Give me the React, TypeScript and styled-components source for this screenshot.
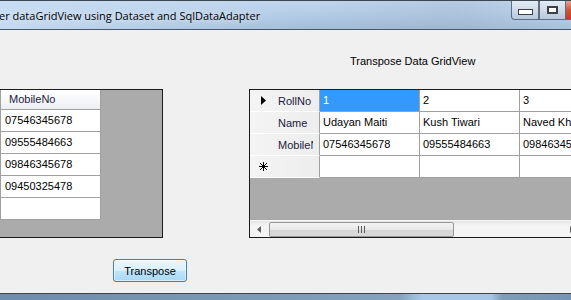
import React from 'react'
import styled, { createGlobalStyle } from 'styled-components'

const GlobalStyle = createGlobalStyle`
	html, body {
		margin: 0;
		padding: 0;
		overflow: hidden;
		background: #f0f0f0;
	}
`

const Window = styled.div`
	width: 571px;
	height: 300px;
	display: flex;
	flex-direction: column;
	overflow: hidden;
	font-family: 'Liberation Sans', Arial, sans-serif;
	font-size: 11px;
	color: #000;
`

const TitleBar = styled.div`
	flex: none;
	display: flex;
	align-items: flex-start;
	justify-content: space-between;
	border-top: 1px solid #3a4652;
	border-bottom: 1px solid #4b5763;
	box-sizing: border-box;
	height: 30px;
	background: linear-gradient(to right, rgba(200, 222, 244, 0.9) 0%, rgba(176, 200, 226, 0.2) 55%, rgba(160, 180, 204, 0.4) 80%, rgba(190, 212, 236, 0.3) 100%),
		linear-gradient(to bottom, #c3d9ef 0%, #b4cce6 50%, #9fb9d5 100%);
`

const TitleText = styled.div`
	font-family: 'Open Sans', 'Noto Sans', sans-serif;
	font-size: 11px;
	line-height: 16px;
	margin-top: 7px;
	margin-left: -1px;
	white-space: nowrap;
	color: #000;
	text-shadow: 0 0 6px rgba(255, 255, 255, 0.9);
`

const CaptionButtons = styled.div`
	display: flex;
	margin-right: -42px;
`

const CaptionButton = styled.div<{ w: number; close?: boolean }>`
	width: ${({ w }) => w}px;
	height: 19px;
	box-sizing: border-box;
	display: flex;
	align-items: center;
	justify-content: center;
	border: 1px solid #5e6e80;
	border-top: none;
	border-left-width: ${({ close }) => (close ? 0 : 1)}px;
	background: ${({ close }) =>
		close
			? 'linear-gradient(to bottom, #e8a493 0%, #d0543b 50%, #c43c1f 100%)'
			: 'linear-gradient(to bottom, #e4ebf3 0%, #cfdbe8 50%, #b7c9dc 100%)'};
	&:first-child {
		border-bottom-left-radius: 4px;
	}
`

const MinGlyph = styled.div`
	width: 13px;
	height: 4px;
	margin-top: 4px;
	background: #fff;
	border: 1px solid #3b3f46;
`

const MaxGlyph = styled.div`
	width: 9px;
	height: 6px;
	background: #fff;
	border: 1px solid #3b3f46;
	box-shadow: inset 0 0 0 1px #3b3f46, inset 0 0 0 2px #fff;
`

const Client = styled.div`
	flex: 1;
	display: flex;
	background: #f0f0f0;
`

const LeftCol = styled.div`
	width: 162px;
	flex: none;
	display: flex;
	flex-direction: column;
	align-items: flex-start;
`

const RightCol = styled.div`
	margin-left: 87px;
	flex: none;
	display: flex;
	flex-direction: column;
`

const Caption = styled.div`
	margin-top: 25px;
	padding-left: 101px;
	line-height: 13px;
	height: 13px;
`

const GridBox = styled.div<{ w: number; top: number; shiftLeft?: number }>`
	width: ${({ w }) => w}px;
	height: 149px;
	box-sizing: border-box;
	border: 1px solid #1b1b1b;
	background: #ababab;
	margin-top: ${({ top }) => top}px;
	margin-left: ${({ shiftLeft }) => shiftLeft ?? 0}px;
	display: flex;
	flex-direction: column;
	overflow: hidden;
`

const HeaderCell = styled.div`
	width: 101px;
	height: 20px;
	box-sizing: border-box;
	border-left: 1px solid #a0a0a0;
	border-right: 1px solid #a0a0a0;
	border-bottom: 1px solid #a0a0a0;
	background: linear-gradient(to bottom, #ffffff 0%, #f7f8fa 50%, #eceef2 100%);
	color: #1a1a40;
	padding-left: 8px;
	line-height: 19px;
`

const Row = styled.div`
	display: flex;
	height: 22px;
	flex: none;
`

const Cell = styled.div<{ w: number; selected?: boolean; leftLine?: boolean }>`
	width: ${({ w }) => w}px;
	flex: none;
	box-sizing: border-box;
	height: 22px;
	border-bottom: 1px solid #a0a0a0;
	border-right: 1px solid #a0a0a0;
	border-left: ${({ leftLine }) => (leftLine ? '1px solid #a0a0a0' : 'none')};
	background: ${({ selected }) => (selected ? '#3399ff' : '#ffffff')};
	color: ${({ selected }) => (selected ? '#ffffff' : '#000000')};
	padding-left: ${({ leftLine }) => (leftLine ? 4 : 3)}px;
	line-height: 21px;
	white-space: nowrap;
	overflow: hidden;
`

const RowHeader = styled.div`
	width: 70px;
	flex: none;
	box-sizing: border-box;
	height: 22px;
	border-bottom: 1px solid #ffffff;
	border-right: 1px solid #a0a0a0;
	background: linear-gradient(to right, #f4f4f4 0%, #ededed 100%);
	display: flex;
	align-items: center;
	color: #1a1a40;
	white-space: nowrap;
	overflow: hidden;
`

const RowMarker = styled.div`
	width: 27px;
	flex: none;
	display: flex;
	align-items: center;
	justify-content: center;
	padding-right: 1px;
`

const RowLabel = styled.div`
	width: 35px;
	overflow: hidden;
	white-space: nowrap;
`

const GreyFill = styled.div`
	flex: 1;
`

const ScrollBar = styled.div`
	height: 17px;
	flex: none;
	display: flex;
	align-items: center;
	background: linear-gradient(to bottom, #e6e6e6 0%, #f4f4f4 30%, #f4f4f4 100%);
	border-top: 1px solid #f4f4f4;
	box-sizing: border-box;
`

const ArrowBox = styled.div`
	width: 17px;
	flex: none;
	display: flex;
	align-items: center;
	justify-content: center;
`

const Thumb = styled.div`
	width: 185px;
	height: 15px;
	box-sizing: border-box;
	margin-left: 2px;
	border: 1px solid #979797;
	border-radius: 2px;
	background: linear-gradient(to bottom, #f3f3f3 0%, #e8e8e8 50%, #d6d6d6 51%, #d9d9d9 100%);
	display: flex;
	align-items: center;
	justify-content: center;
`

const Track = styled.div`
	flex: 1;
`

const ButtonRow = styled.div`
	margin-top: 21px;
	margin-left: 113px;
`

const PushButton = styled.button`
	width: 74px;
	height: 23px;
	box-sizing: border-box;
	border: 1px solid #3c7fb1;
	border-radius: 3px;
	background: linear-gradient(to bottom, #eaf6fd 0%, #d9f0fc 50%, #bee6fd 51%, #a7d9f5 100%);
	box-shadow: inset 0 0 0 1px rgba(255, 255, 255, 0.6);
	font-family: 'Liberation Sans', Arial, sans-serif;
	font-size: 11px;
	color: #000;
	padding: 0;
	line-height: 20px;
`

const BottomFrame = styled.div`
	height: 7px;
	flex: none;
	border-top: 1px solid #3d454e;
	box-sizing: border-box;
	background: linear-gradient(to right, #6e8cab 0%, #7a97b6 40%, #86a2c0 70%, #a9c8e8 74%, #a7c5e4 86%, #7f9cbb 88%, #7794b4 100%);
`

const Triangle = () => (
	<svg width="5" height="9" viewBox="0 0 5 9">
		<path d="M0 0 L5 4.5 L0 9 Z" fill="#000" />
	</svg>
)

const NewRowStar = () => (
	<svg width="9" height="9" viewBox="0 0 9 9">
		<g stroke="#000" strokeWidth="1" shapeRendering="crispEdges">
			<line x1="4.5" y1="0" x2="4.5" y2="9" />
			<line x1="0" y1="4.5" x2="9" y2="4.5" />
			<line x1="1" y1="1" x2="8" y2="8" />
			<line x1="8" y1="1" x2="1" y2="8" />
		</g>
	</svg>
)

const ScrollArrow = ({ dir }: { dir: 'left' | 'right' }) => (
	<svg width="4" height="7" viewBox="0 0 4 7">
		<path d={dir === 'left' ? 'M4 0 L0 3.5 L4 7 Z' : 'M0 0 L4 3.5 L0 7 Z'} fill="#606060" />
	</svg>
)

const Grip = () => (
	<svg width="7" height="7" viewBox="0 0 7 7">
		<g fill="#5a5a5a">
			<rect x="0" y="0" width="1" height="7" />
			<rect x="3" y="0" width="1" height="7" />
			<rect x="6" y="0" width="1" height="7" />
		</g>
	</svg>
)

const mobiles = ['07546345678', '09555484663', '09846345678', '09450325478']

const transposed: { label: string; values: string[] }[] = [
	{ label: 'RollNo', values: ['1', '2', '3'] },
	{ label: 'Name', values: ['Udayan Maiti', 'Kush Tiwari', 'Naved Khan'] },
	{ label: 'MobileNo', values: ['07546345678', '09555484663', '09846345678'] },
]

export default function App() {
	return (
		<>
			<GlobalStyle />
			<Window>
				<TitleBar>
					<TitleText>er dataGridView using Dataset and SqlDataAdapter</TitleText>
					<CaptionButtons>
						<CaptionButton w={28}>
							<MinGlyph />
						</CaptionButton>
						<CaptionButton w={27}>
							<MaxGlyph />
						</CaptionButton>
						<CaptionButton w={47} close />
					</CaptionButtons>
				</TitleBar>
				<Client>
					<LeftCol>
						<GridBox w={164} top={59} shiftLeft={-1}>
							<HeaderCell>MobileNo</HeaderCell>
							{mobiles.map((m) => (
								<Row key={m}>
									<Cell w={101} leftLine>
										{m}
									</Cell>
								</Row>
							))}
							<Row>
								<Cell w={101} leftLine />
							</Row>
							<GreyFill />
						</GridBox>
						<ButtonRow>
							<PushButton>Transpose</PushButton>
						</ButtonRow>
					</LeftCol>
					<RightCol>
						<Caption>Transpose Data GridView</Caption>
						<GridBox w={332} top={21}>
							{transposed.map((r, i) => (
								<Row key={r.label}>
									<RowHeader>
										<RowMarker>{i === 0 && <Triangle />}</RowMarker>
										<RowLabel>{r.label}</RowLabel>
									</RowHeader>
									{r.values.map((v, j) => (
										<Cell key={j} w={100} selected={i === 0 && j === 0}>
											{v}
										</Cell>
									))}
								</Row>
							))}
							<Row>
								<RowHeader>
									<RowMarker>
										<NewRowStar />
									</RowMarker>
								</RowHeader>
								<Cell w={100} />
								<Cell w={100} />
								<Cell w={100} />
							</Row>
							<GreyFill />
							<ScrollBar>
								<ArrowBox>
									<ScrollArrow dir="left" />
								</ArrowBox>
								<Thumb>
									<Grip />
								</Thumb>
								<Track />
								<ArrowBox>
									<ScrollArrow dir="right" />
								</ArrowBox>
							</ScrollBar>
						</GridBox>
					</RightCol>
				</Client>
				<BottomFrame />
			</Window>
		</>
	)
}
